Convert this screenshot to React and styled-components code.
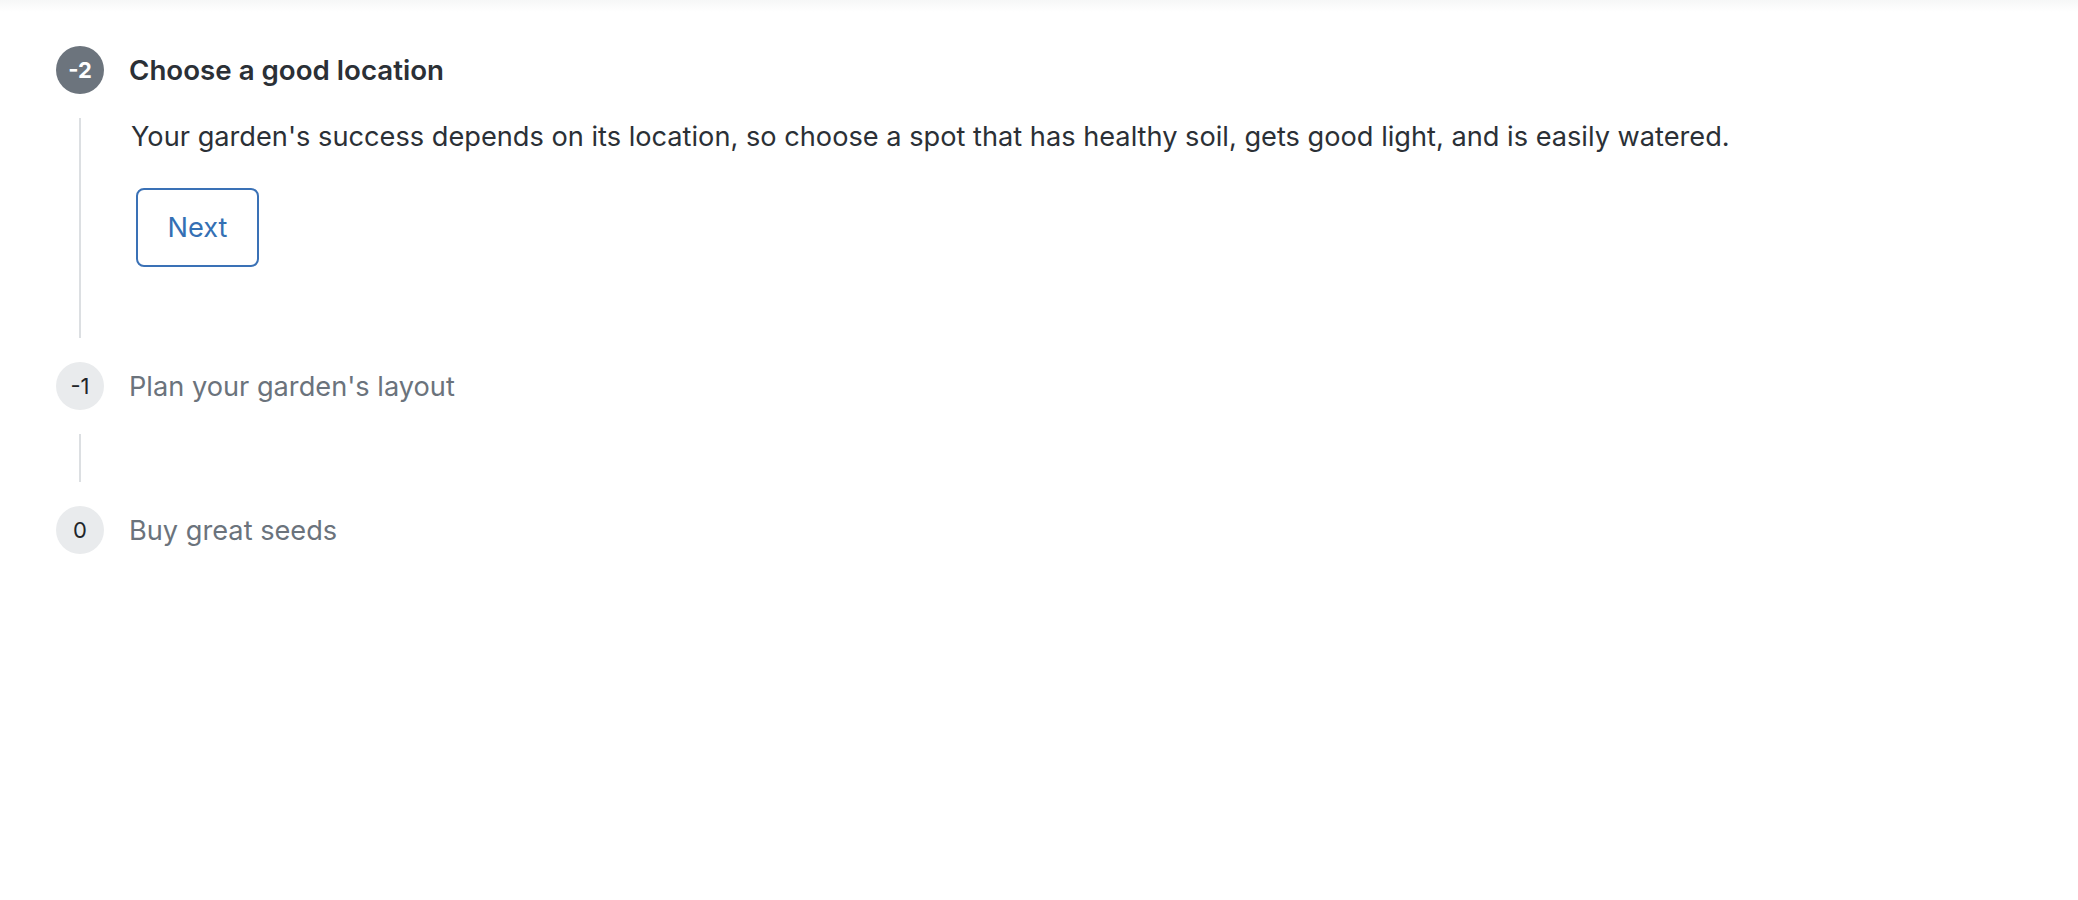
import React from 'react';
import styled, { createGlobalStyle } from 'styled-components';

const GlobalStyle = createGlobalStyle`
  html, body {
    margin: 0;
    padding: 0;
    background: #ffffff;
  }
  body {
    font-family: Inter, "Noto Sans", "Liberation Sans", sans-serif;
    color: #2b3036;
  }
`;

const Page = styled.div`
  min-height: 900px;
  background: #ffffff;
`;

const TopShade = styled.div`
  height: 12px;
  background: linear-gradient(#f6f7f7, #ffffff);
`;

const Stepper = styled.div`
  display: flex;
  flex-direction: column;
  padding: 34px 0 0 56px;
`;

const Step = styled.div`
  display: grid;
  grid-template-columns: 48px 1fr;
  column-gap: 25px;
`;

const Circle = styled.div`
  width: 48px;
  height: 48px;
  border-radius: 50%;
  display: flex;
  align-items: center;
  justify-content: center;
  font-size: 22px;
  font-weight: ${p => (p.$active ? 700 : 400)};
  background: ${p => (p.$active ? '#6c747d' : '#e9ebed')};
  color: ${p => (p.$active ? '#ffffff' : '#212529')};
`;

const Title = styled.div`
  display: flex;
  align-items: center;
  height: 48px;
  font-size: ${p => (p.$active ? '27.7px' : '27.2px')};
  font-weight: ${p => (p.$active ? 600 : 400)};
  color: ${p => (p.$active ? '#2b3036' : '#6b737c')};
`;

const Rail = styled.div`
  display: flex;
  justify-content: center;
  padding: 24px 0;
`;

const Line = styled.div`
  width: 2px;
  background: #dcdfe2;
`;

const Body = styled.div`
  min-height: 96px;
  padding: ${p => (p.$open ? '22px 0 95px 2px' : '0')};
  box-sizing: border-box;
`;

const Text = styled.p`
  margin: 0;
  font-size: 27.2px;
  line-height: 42px;
  color: #2b3036;
`;

const NextButton = styled.button`
  margin: 30px 0 0 5px;
  width: 123px;
  height: 79px;
  border: 2px solid #3a71b6;
  border-radius: 8px;
  background: #ffffff;
  color: #3470b4;
  font-family: inherit;
  font-size: 27.2px;
  cursor: pointer;
`;

const steps = [
  {
    n: -2,
    title: 'Choose a good location',
    text: "Your garden's success depends on its location, so choose a spot that has healthy soil, gets good light, and is easily watered.",
  },
  { n: -1, title: "Plan your garden's layout" },
  { n: 0, title: 'Buy great seeds' },
];

export default function App() {
  const active = 0;
  return (
    <Page>
      <GlobalStyle />
      <TopShade />
      <Stepper>
        {steps.map((s, i) => {
          const isActive = i === active;
          const last = i === steps.length - 1;
          return (
            <Step key={s.n}>
              <Circle $active={isActive}>{s.n}</Circle>
              <Title $active={isActive}>{s.title}</Title>
              {!last && (
                <>
                  <Rail>
                    <Line />
                  </Rail>
                  <Body $open={isActive}>
                    {isActive && (
                      <>
                        <Text>{s.text}</Text>
                        <NextButton>Next</NextButton>
                      </>
                    )}
                  </Body>
                </>
              )}
            </Step>
          );
        })}
      </Stepper>
    </Page>
  );
}
